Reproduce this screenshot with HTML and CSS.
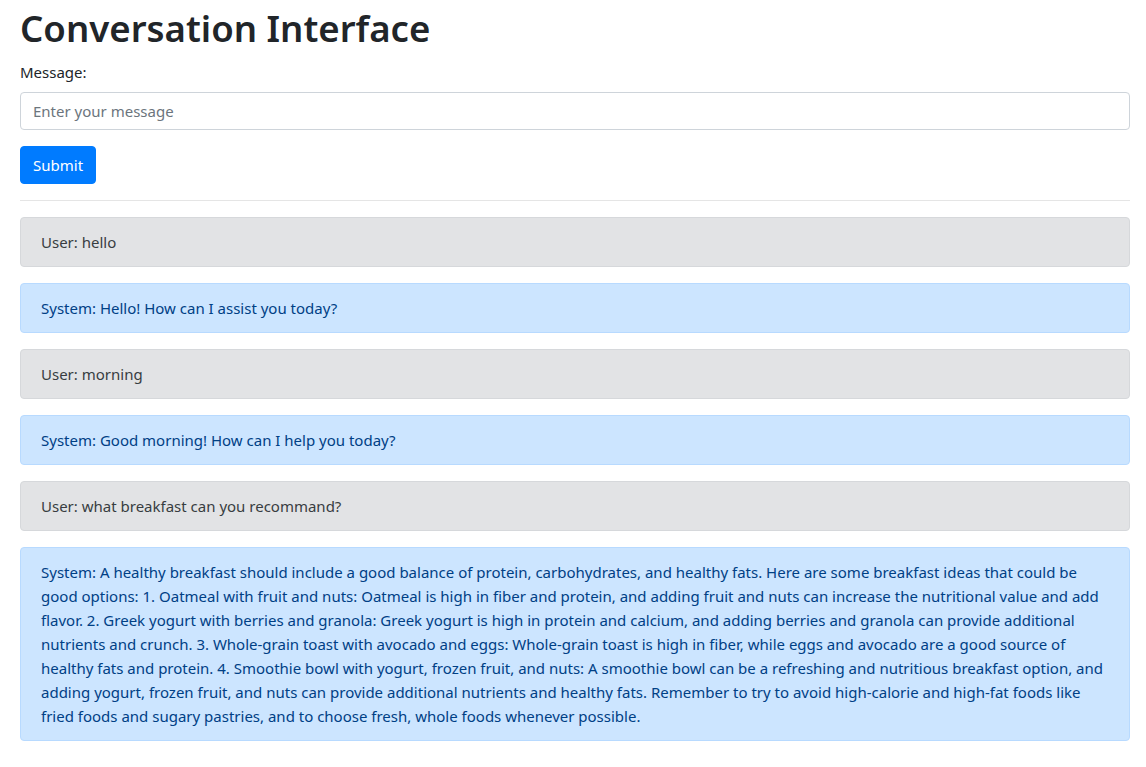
FILE: index.html
```html
<!DOCTYPE html>
<html lang="en">
<head>
<meta charset="utf-8">
<title>Conversation Interface</title>
<link rel="stylesheet" href="styles.css">
</head>
<body>
<div class="page">
  <h1 class="title">Conversation Interface</h1>
  <form class="form">
    <div class="form-group">
      <label class="label" for="msg">Message:</label>
      <input class="input" id="msg" type="text" placeholder="Enter your message">
    </div>
    <button class="btn" type="button">Submit</button>
  </form>
  <hr class="rule">
  <div class="messages">
    <div class="msg msg-user">User: hello</div>
    <div class="msg msg-system">System: Hello! How can I assist you today?</div>
    <div class="msg msg-user">User: morning</div>
    <div class="msg msg-system">System: Good morning! How can I help you today?</div>
    <div class="msg msg-user">User: what breakfast can you recommand?</div>
    <div class="msg msg-system">System: A healthy breakfast should include a good balance of protein, carbohydrates, and healthy fats. Here are some breakfast ideas that could be good options: 1. Oatmeal with fruit and nuts: Oatmeal is high in fiber and protein, and adding fruit and nuts can increase the nutritional value and add flavor. 2. Greek yogurt with berries and granola: Greek yogurt is high in protein and calcium, and adding berries and granola can provide additional nutrients and crunch. 3. Whole-grain toast with avocado and eggs: Whole-grain toast is high in fiber, while eggs and avocado are a good source of healthy fats and protein. 4. Smoothie bowl with yogurt, frozen fruit, and nuts: A smoothie bowl can be a refreshing and nutritious breakfast option, and adding yogurt, frozen fruit, and nuts can provide additional nutrients and healthy fats. Remember to try to avoid high-calorie and high-fat foods like fried foods and sugary pastries, and to choose fresh, whole foods whenever possible.</div>
  </div>
</div>
</body>
</html>
```
FILE: styles.css
```css
* { box-sizing: border-box; }
html, body { margin: 0; padding: 0; background: #fff; }
body {
  font-family: "Noto Sans", "Open Sans", sans-serif;
  font-size: 15px;
  line-height: 24px;
  color: #212529;
}
.page { padding: 4px 16px 0 20px; }
.title {
  margin: 0 0 8px;
  font-size: 36.6px;
  line-height: 48px;
  font-weight: 600;
}
.form { margin: 0; }
.form-group { margin-bottom: 16px; }
.label { display: block; margin-bottom: 8px; }
.input {
  display: block;
  width: 100%;
  height: 38px;
  padding: 6px 12px;
  font: inherit;
  color: #495057;
  background: #fff;
  border: 1px solid #ced4da;
  border-radius: 4px;
}
.input::placeholder { color: #6c757d; }
.btn {
  display: inline-block;
  height: 38px;
  padding: 6px 12px;
  font: inherit;
  color: #fff;
  background: #007bff;
  border: 1px solid #007bff;
  border-radius: 4px;
}
.rule {
  margin: 16px 0;
  border: 0;
  border-top: 1px solid rgba(0,0,0,.1);
}
.msg {
  padding: 12px 20px;
  margin-bottom: 16px;
  border: 1px solid transparent;
  border-radius: 4px;
}
.msg-user { color: #383d41; background: #e2e3e5; border-color: #d6d8db; }
.msg-system { color: #004085; background: #cce5ff; border-color: #b8daff; }
```
